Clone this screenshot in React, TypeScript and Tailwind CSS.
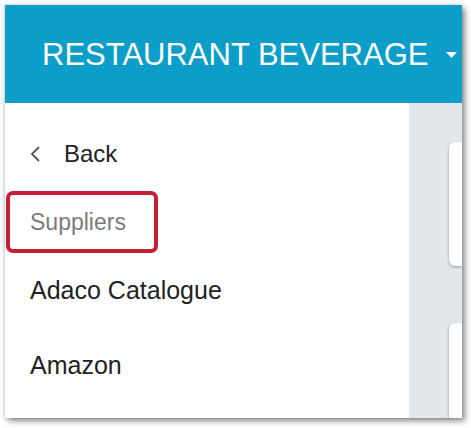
export default function App() {
  return (
    <div className="w-[471px] h-[428px] bg-white overflow-hidden" style={{ fontFamily: '"Liberation Sans", Arial, sans-serif' }}>
      <div className="ml-[5px] mt-[5px] w-[457px] h-[413px] overflow-hidden bg-white flex flex-col shadow-[3px_3px_6px_rgba(0,0,0,0.45),-1px_0_4px_rgba(0,0,0,0.15)]">
        <header className="h-[98px] shrink-0 bg-[#0c9dc9] flex items-center pl-[37px] whitespace-nowrap">
          <span className="text-[31px] leading-none text-white">RESTAURANT BEVERAGE</span>
          <svg className="ml-[18px] mt-[2px] shrink-0" width="11" height="6" viewBox="0 0 11 6">
            <path d="M0 0H11L5.5 6Z" fill="#fff" />
          </svg>
        </header>
        <div className="flex flex-1 min-h-0">
          <nav className="w-[404px] shrink-0 bg-white pt-[20px] text-[#222]">
            <div className="h-[62px] flex items-center pl-[25px]">
              <svg width="11" height="16" viewBox="0 0 11 16" className="shrink-0">
                <path d="M9 1L2 8L9 15" fill="none" stroke="#555" strokeWidth="1.8" />
              </svg>
              <span className="ml-[23px] text-[24px] leading-none">Back</span>
            </div>
            <div className="ml-[1px] mt-[6px] w-[152px] h-[62px] border-4 border-[#c41f35] rounded-[7px] flex items-center pl-[20px]">
              <span className="text-[23px] leading-none text-[#7b7b7b]">Suppliers</span>
            </div>
            <div className="h-[74px] flex items-center pl-[25px]">
              <span className="text-[25px] leading-none">Adaco Catalogue</span>
            </div>
            <div className="h-[76px] flex items-center pl-[25px]">
              <span className="text-[25px] leading-none">Amazon</span>
            </div>
          </nav>
          <div className="flex-1 bg-[#e2e7eb] pl-[40px] pt-[39px] flex flex-col">
            <div className="h-[124px] bg-white rounded-l-[6px] shadow-[0_1px_3px_rgba(0,0,0,0.35)]" />
            <div className="mt-[57px] flex-1 bg-white rounded-tl-[6px] shadow-[0_1px_3px_rgba(0,0,0,0.35)]" />
          </div>
        </div>
      </div>
    </div>
  )
}
